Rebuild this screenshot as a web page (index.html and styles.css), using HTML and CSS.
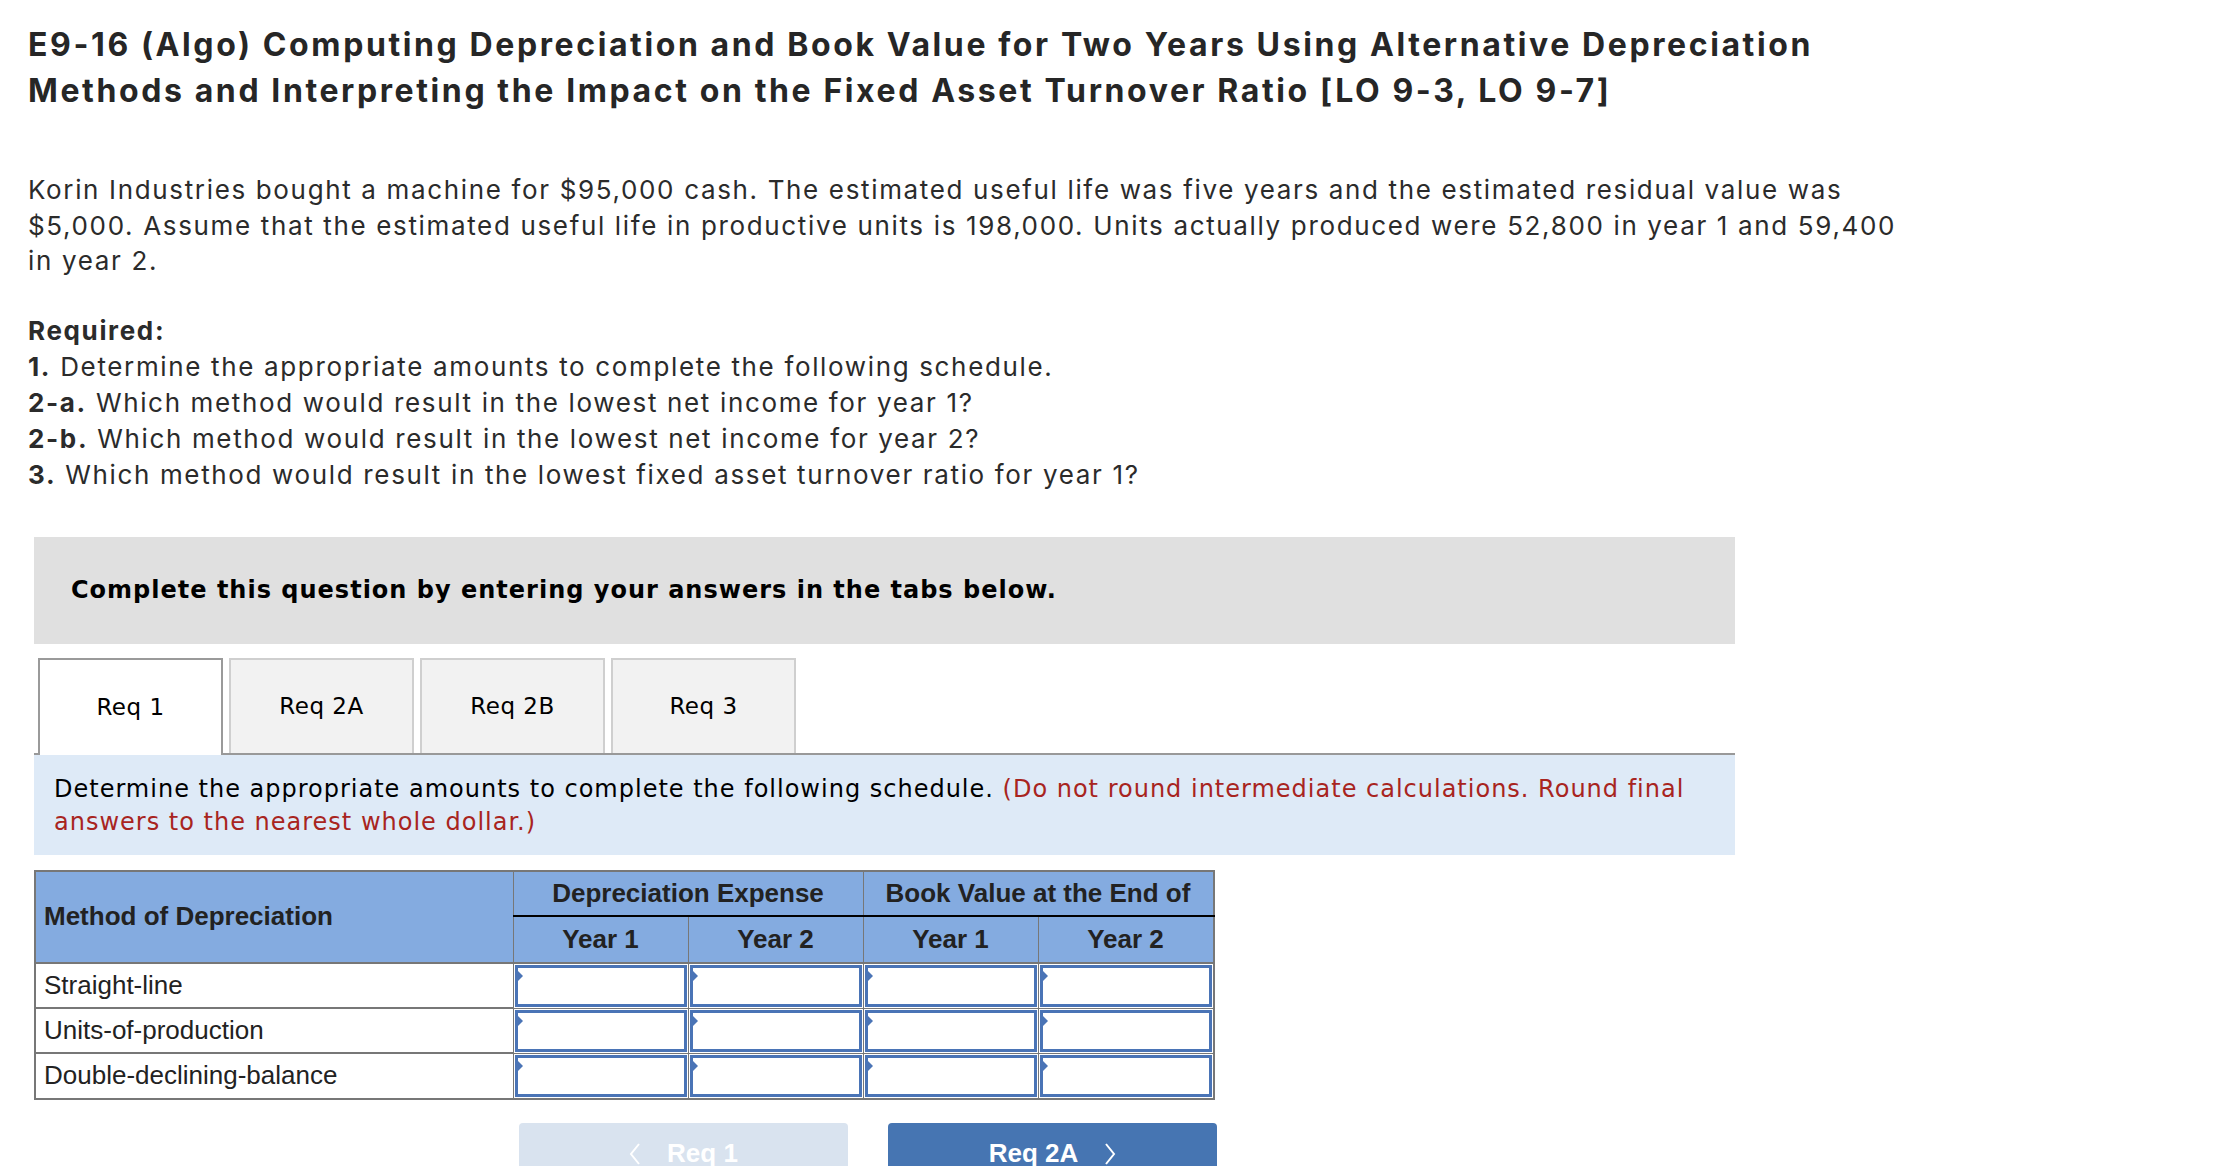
FILE: index.html
```html
<!DOCTYPE html>
<html>
<head>
<meta charset="utf-8">
<link rel="stylesheet" href="styles.css">
</head>
<body>
<div class="page">
  <h1 class="title">E9-16 (Algo) Computing Depreciation and Book Value for Two Years Using Alternative Depreciation Methods and Interpreting the Impact on the Fixed Asset Turnover Ratio [LO 9-3, LO 9-7]</h1>
  <p class="intro">Korin Industries bought a machine for $95,000 cash. The estimated useful life was five years and the estimated residual value was $5,000. Assume that the estimated useful life in productive units is 198,000. Units actually produced were 52,800 in year 1 and 59,400 in year 2.</p>
  <div class="required">
    <div><b>Required:</b></div>
    <div><b>1.</b> Determine the appropriate amounts to complete the following schedule.</div>
    <div><b>2-a.</b> Which method would result in the lowest net income for year 1?</div>
    <div><b>2-b.</b> Which method would result in the lowest net income for year 2?</div>
    <div><b>3.</b> Which method would result in the lowest fixed asset turnover ratio for year 1?</div>
  </div>

  <div class="question">
    <div class="banner">Complete this question by entering your answers in the tabs below.</div>
    <div class="tabs">
      <div class="tab active">Req 1</div>
      <div class="tab">Req 2A</div>
      <div class="tab">Req 2B</div>
      <div class="tab">Req 3</div>
    </div>
    <div class="instr">Determine the appropriate amounts to complete the following schedule. <span class="red">(Do not round intermediate calculations. Round final answers to the nearest whole dollar.)</span></div>

    <table class="sched">
      <thead>
        <tr class="h1row">
          <th rowspan="2" class="method">Method of Depreciation</th>
          <th colspan="2" class="grp">Depreciation Expense</th>
          <th colspan="2" class="grp">Book Value at the End of</th>
        </tr>
        <tr class="h2row">
          <th>Year 1</th><th>Year 2</th><th>Year 1</th><th>Year 2</th>
        </tr>
      </thead>
      <tbody>
        <tr>
          <td class="label">Straight-line</td>
          <td class="inp"><div class="box"></div></td>
          <td class="inp"><div class="box"></div></td>
          <td class="inp"><div class="box"></div></td>
          <td class="inp"><div class="box"></div></td>
        </tr>
        <tr>
          <td class="label">Units-of-production</td>
          <td class="inp"><div class="box"></div></td>
          <td class="inp"><div class="box"></div></td>
          <td class="inp"><div class="box"></div></td>
          <td class="inp"><div class="box"></div></td>
        </tr>
        <tr>
          <td class="label">Double-declining-balance</td>
          <td class="inp"><div class="box"></div></td>
          <td class="inp"><div class="box"></div></td>
          <td class="inp"><div class="box"></div></td>
          <td class="inp"><div class="box"></div></td>
        </tr>
      </tbody>
    </table>

    <div class="nav">
      <div class="btn prev"><svg class="chev" width="12" height="24" viewBox="0 0 12 24"><polyline points="10,2 2,12 10,22" fill="none" stroke="#fff" stroke-width="2"/></svg><span>Req 1</span></div>
      <div class="btn next"><span>Req 2A</span><svg class="chev" width="12" height="24" viewBox="0 0 12 24"><polyline points="2,2 10,12 2,22" fill="none" stroke="#fff" stroke-width="2"/></svg></div>
    </div>
  </div>
</div>
</body>
</html>
```

FILE: styles.css
```css
html, body {
  margin: 0;
  padding: 0;
  background: #fff;
}
.page {
  padding: 22px 0 0 28px;
  width: 1980px;
  color: #2b2b2b;
  font-family: "Inter", "Lato", "Liberation Sans", sans-serif;
}
.title {
  margin: 0;
  font-size: 32px;
  line-height: 46px;
  font-weight: 700;
  letter-spacing: 2.6px;
  color: #262626;
  width: 1850px;
}
.intro {
  margin: 58px 0 0 0;
  font-size: 26px;
  line-height: 35.5px;
  letter-spacing: 1.65px;
  width: 1880px;
}
.required {
  margin-top: 34px;
  font-size: 26px;
  line-height: 36px;
  letter-spacing: 1.65px;
}
.required b {
  font-weight: 700;
}
.question {
  margin: 44px 0 0 6px;
  width: 1701px;
}
.banner {
  background: #e0e0e0;
  height: 107px;
  box-sizing: border-box;
  padding-left: 37px;
  display: flex;
  align-items: center;
  font-family: "DejaVu Sans", Verdana, sans-serif;
  font-weight: 700;
  font-size: 24px;
  letter-spacing: 1px;
  color: #000;
}
.tabs {
  margin-top: 14px;
  display: flex;
  gap: 6px;
  padding-left: 4px;
  border-bottom: 2px solid #999;
  height: 95px;
  align-items: flex-end;
}
.tab {
  width: 185px;
  height: 95px;
  box-sizing: border-box;
  background: #f2f2f2;
  border: 2px solid #cfcfcf;
  border-bottom: none;
  display: flex;
  align-items: center;
  justify-content: center;
  font-family: "DejaVu Sans", Verdana, sans-serif;
  font-size: 23px;
  letter-spacing: 0.5px;
  color: #000;
}
.tab.active {
  background: #fff;
  border-color: #9a9a9a;
  height: 97px;
  margin-bottom: -2px;
}
.instr {
  background: #deeaf7;
  height: 100px;
  box-sizing: border-box;
  padding: 18px 20px 0 20px;
  font-family: "DejaVu Sans", Verdana, sans-serif;
  font-size: 24px;
  letter-spacing: 1px;
  line-height: 33px;
  color: #000;
}
.red {
  color: #a82420;
}
.sched {
  margin-top: 15px;
  border-collapse: collapse;
  font-family: "Liberation Sans", Arial, sans-serif;
  font-size: 26px;
  color: #222;
  border: 2px solid #777;
}
.sched th {
  background: #84abe0;
  font-weight: 700;
  padding: 0;
  border-left: 1px solid #777;
  border-right: 1px solid #777;
}
.sched th.method {
  width: 478px;
  text-align: left;
  padding-left: 8px;
  box-sizing: border-box;
  border-bottom: 2px solid #777;
}
.h1row th.grp {
  height: 43px;
  border-bottom: 2px solid #000;
}
.h2row th {
  height: 45px;
  width: 174px;
  border-bottom: 2px solid #777;
}
.sched td.label {
  padding: 0 0 0 8px;
  border-bottom: 2px solid #777;
  font-weight: 400;
}
.sched td.inp {
  padding: 1px;
  border: 1px solid #777;
}
.box {
  box-sizing: border-box;
  height: 42px;
  border: 3px solid #4a74b6;
  background: #fff;
  position: relative;
}
.box::before {
  content: "";
  position: absolute;
  left: -3px;
  top: 0;
  border-left: 8px solid #4a74b6;
  border-top: 8px solid transparent;
  border-bottom: 8px solid transparent;
}
.nav {
  margin-top: 23px;
  padding-left: 485px;
  display: flex;
  gap: 40px;
}
.btn {
  width: 329px;
  height: 62px;
  border-radius: 4px;
  display: flex;
  align-items: center;
  justify-content: center;
  gap: 26px;
  font-family: "Liberation Sans", Arial, sans-serif;
  font-weight: 700;
  font-size: 26px;
  color: #fff;
}
.btn.prev {
  background: #d9e3ef;
}
.btn.next {
  background: #4675b2;
}
```
